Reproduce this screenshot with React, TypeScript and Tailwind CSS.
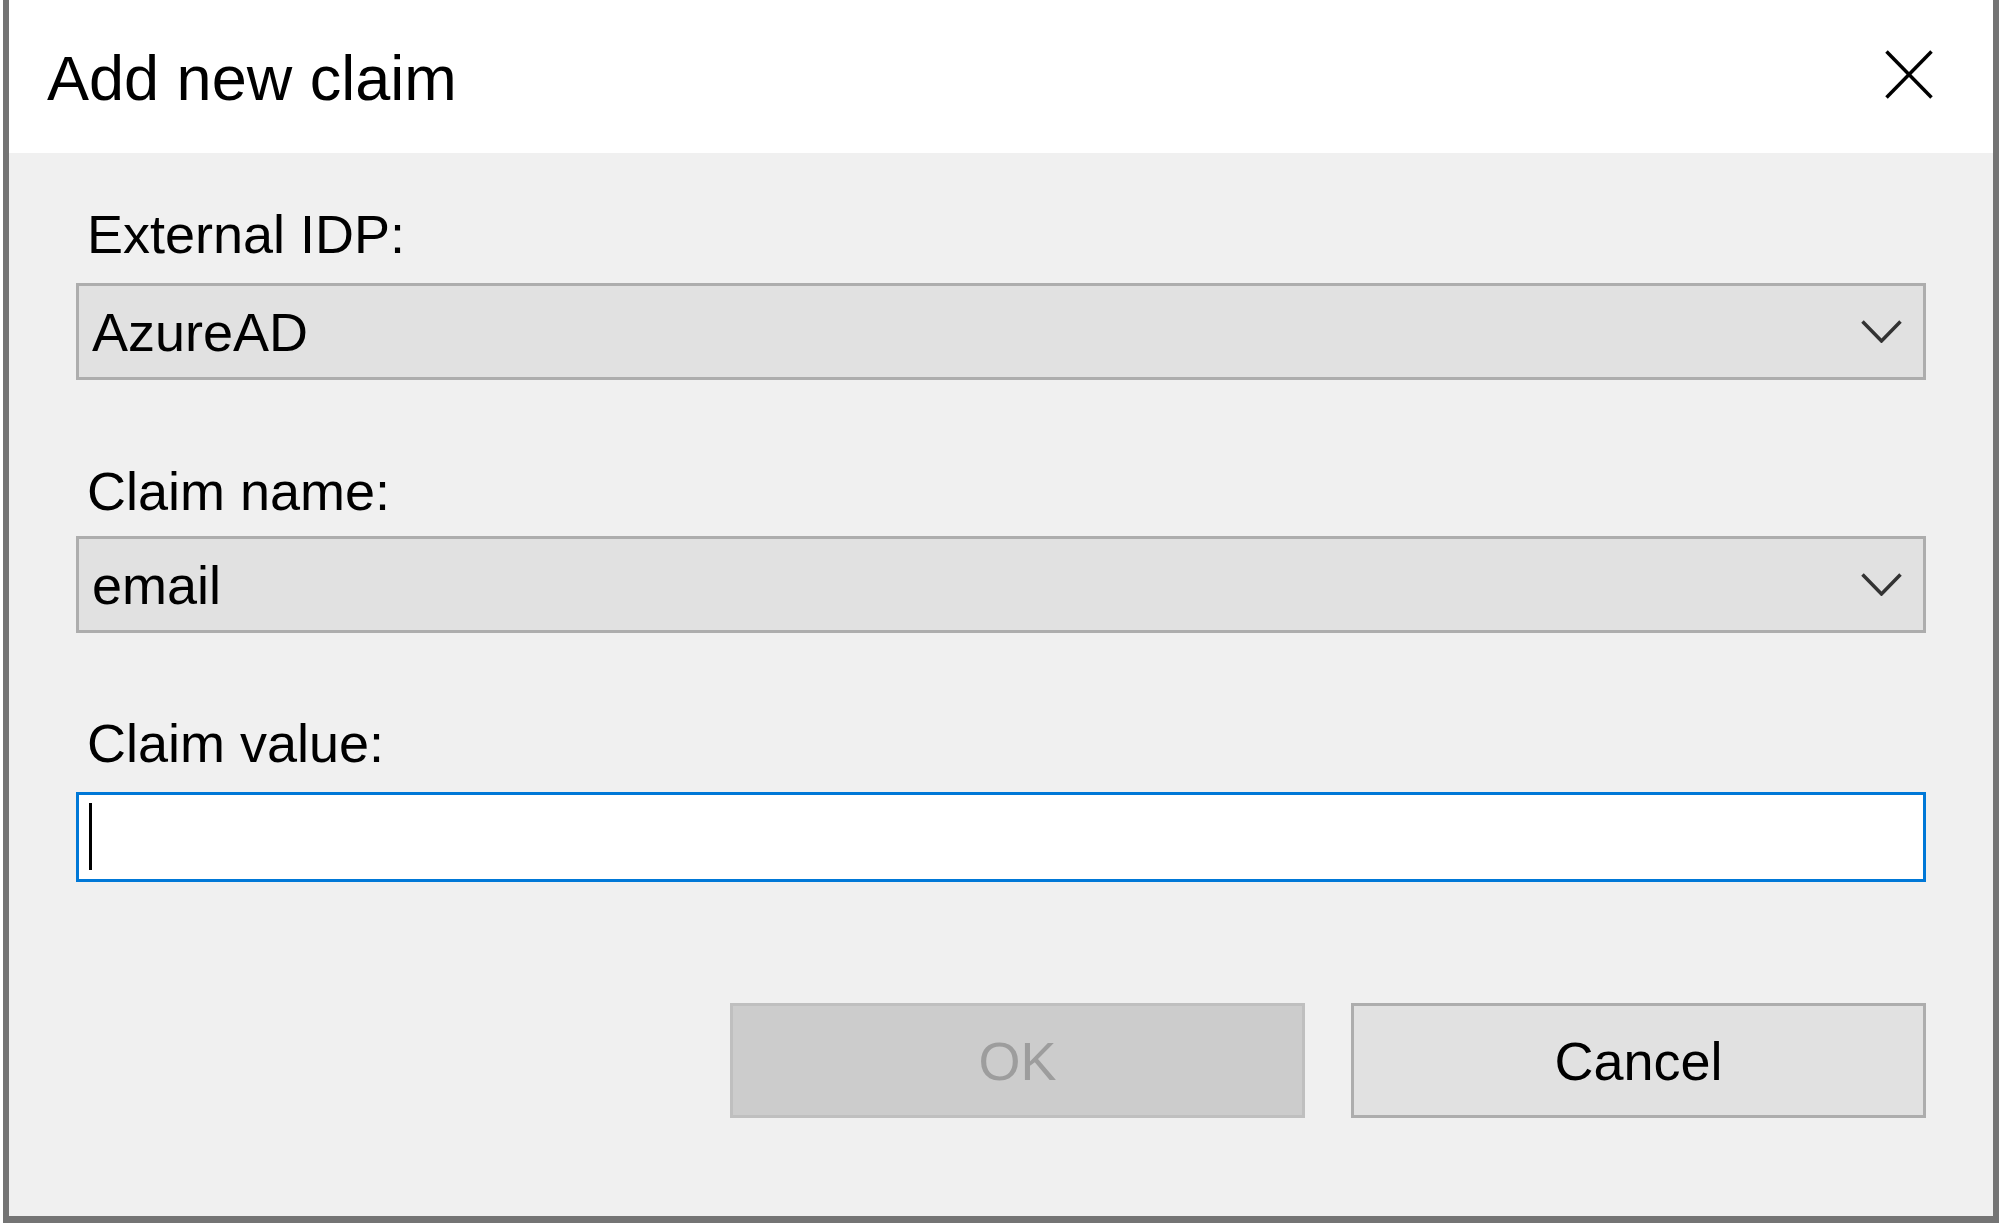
const Chevron = () => (
  <svg width="41" height="23" viewBox="0 0 41 23" fill="none">
    <polyline points="1.5,1.5 20.5,21 39.5,1.5" stroke="#333333" strokeWidth="3.5" />
  </svg>
)

const ComboBox = ({ value }: { value: string }) => (
  <div className="h-[97px] flex items-center justify-between border-[3px] border-[#adadad] bg-[#e1e1e1] pl-[13px] pr-[21px]">
    <span className="text-[54px] leading-[64px] text-black">{value}</span>
    <Chevron />
  </div>
)

const Label = ({ children, className }: { children: string; className: string }) => (
  <div className={`h-[64px] pl-[11px] text-[54px] leading-[64px] text-black ${className}`}>{children}</div>
)

export default function App() {
  return (
    <div className="w-[2000px] h-[1226px] bg-white pl-[3px] pr-[1px] pb-[3px] font-['Liberation_Sans',Arial,sans-serif]">
      <div className="h-full flex flex-col border-x-[6px] border-b-[7px] border-[#747474]">
        {/* title bar */}
        <div className="h-[153px] shrink-0 bg-white flex justify-between pl-[38px] pr-[60px]">
          <div className="pt-[42px] text-[63px] leading-[72px] text-black">Add new claim</div>
          <div className="pt-[50px]">
            <svg width="48" height="49" viewBox="0 0 48 49" fill="none">
              <line x1="1.5" y1="1.5" x2="46.5" y2="47.5" stroke="#000" strokeWidth="3.5" />
              <line x1="46.5" y1="1.5" x2="1.5" y2="47.5" stroke="#000" strokeWidth="3.5" />
            </svg>
          </div>
        </div>

        {/* form */}
        <div className="flex-1 bg-[#f0f0f0] px-[67px] pt-[49px]">
          <Label className="">External IDP:</Label>
          <div className="mt-[17px]">
            <ComboBox value="AzureAD" />
          </div>

          <Label className="mt-[79px]">Claim name:</Label>
          <div className="mt-[13px]">
            <ComboBox value="email" />
          </div>

          <Label className="mt-[78px]">Claim value:</Label>
          <div className="mt-[17px] h-[90px] border-[3px] border-[#0078d7] bg-white pl-[10px] pt-[8px]">
            <div className="w-[3px] h-[67px] bg-black" />
          </div>

          <div className="mt-[121px] flex justify-end gap-[46px]">
            <button className="w-[575px] h-[115px] border-[3px] border-[#bfbfbf] bg-[#cccccc] text-[54px] leading-[64px] text-[#9d9d9d]">
              OK
            </button>
            <button className="w-[575px] h-[115px] border-[3px] border-[#adadad] bg-[#e1e1e1] text-[54px] leading-[64px] text-black">
              Cancel
            </button>
          </div>
        </div>
      </div>
    </div>
  )
}
